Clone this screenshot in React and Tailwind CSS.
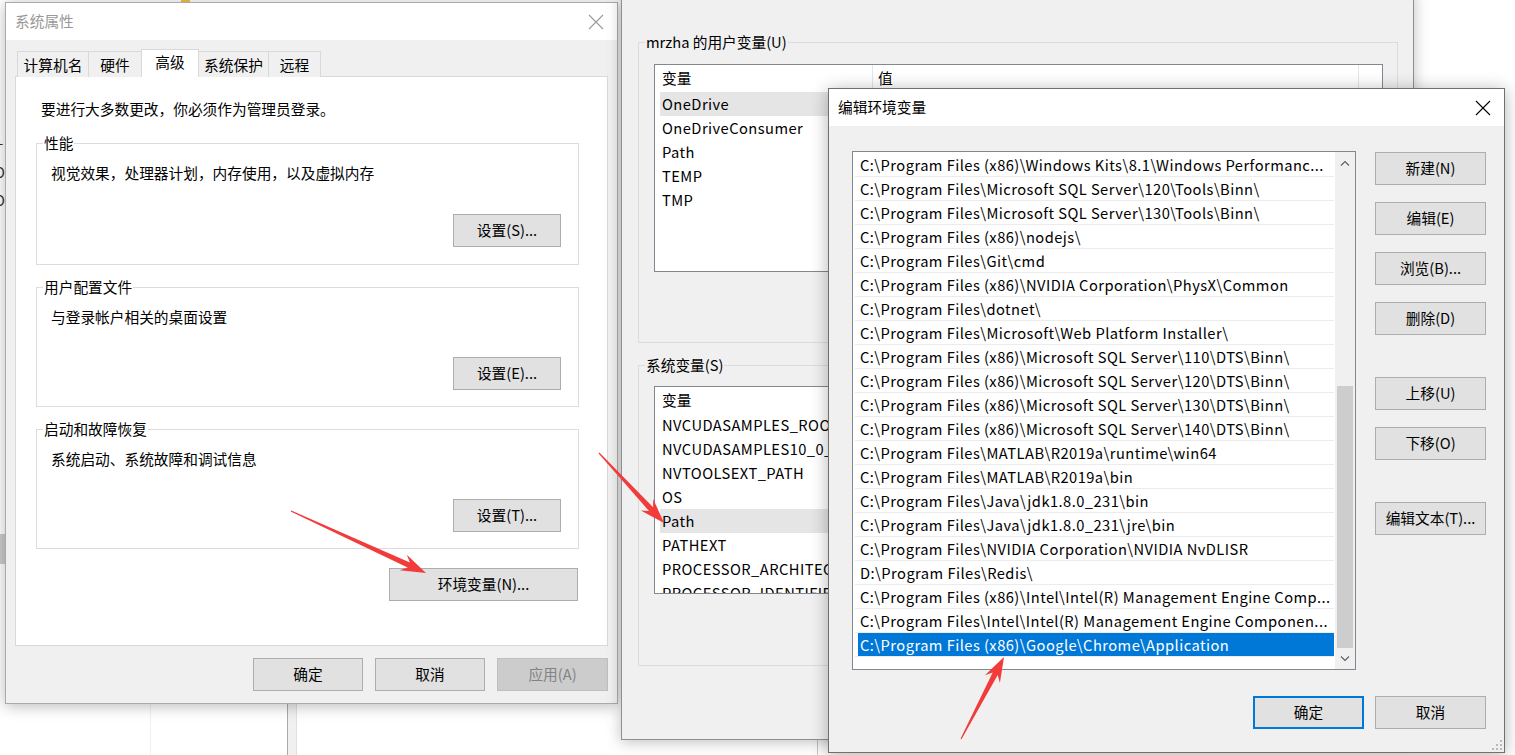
import React from "react";

const Btn = ({ children, className = "", disabled = false }) => (
  <div
    className={`flex items-center justify-center border leading-none ${
      disabled
        ? "border-[#bfbfbf] bg-[#cccccc] text-[#838383]"
        : "border-[#adadad] bg-[#e1e1e1] text-black"
    } ${className}`}
  >
    {children}
  </div>
);

const CloseX = ({ color = "#000" }) => (
  <svg width="16" height="16" viewBox="0 0 16 16">
    <path d="M1 1 L15 15 M15 1 L1 15" stroke={color} strokeWidth="1.1" />
  </svg>
);

const Group = ({ title, className = "", children }) => (
  <div className={`relative border border-[#dcdcdc] ${className}`}>
    <span className="absolute -top-[11px] left-[6px] px-[1px] leading-[20px] bg-inherit">
      {title}
    </span>
    {children}
  </div>
);

// arrow polygon from tail to tip
function arrowPoints(x1, y1, x2, y2) {
  const dx = x2 - x1;
  const dy = y2 - y1;
  const len = Math.hypot(dx, dy);
  const ux = dx / len;
  const uy = dy / len;
  const nx = -uy;
  const ny = ux;
  const L = 25;
  const W = 8.5;
  const w = 2.8;
  const notch = 6;
  const p = (a, b) => `${a.toFixed(1)},${b.toFixed(1)}`;
  const nkx = x2 - (L - notch) * ux;
  const nky = y2 - (L - notch) * uy;
  const bx = x2 - L * ux;
  const by = y2 - L * uy;
  return [
    p(x1 + nx * 0.6, y1 + ny * 0.6),
    p(nkx + nx * w, nky + ny * w),
    p(bx + nx * W, by + ny * W),
    p(x2, y2),
    p(bx - nx * W, by - ny * W),
    p(nkx - nx * w, nky - ny * w),
    p(x1 - nx * 0.6, y1 - ny * 0.6),
  ].join(" ");
}

const arrows = [
  [291, 511, 426, 573],
  [599, 453, 664, 523],
  [961, 739, 1004, 657],
];

const tabs = [
  { name: "计算机名", w: "w-[72px]" },
  { name: "硬件", w: "w-[54px] -ml-[1px]" },
  { name: "高级", w: "w-[58px] -ml-[1px]", active: true },
  { name: "系统保护", w: "w-[71px] -ml-[1px]" },
  { name: "远程", w: "w-[53px] -ml-[1px]" },
];

const userVars = ["OneDrive", "OneDriveConsumer", "Path", "TEMP", "TMP"];
const sysVars = [
  "NVCUDASAMPLES_ROOT",
  "NVCUDASAMPLES10_0_ROOT",
  "NVTOOLSEXT_PATH",
  "OS",
  "Path",
  "PATHEXT",
  "PROCESSOR_ARCHITECTURE",
  "PROCESSOR_IDENTIFIER",
];

const paths = [
  "C:\\Program Files (x86)\\Windows Kits\\8.1\\Windows Performanc...",
  "C:\\Program Files\\Microsoft SQL Server\\120\\Tools\\Binn\\",
  "C:\\Program Files\\Microsoft SQL Server\\130\\Tools\\Binn\\",
  "C:\\Program Files (x86)\\nodejs\\",
  "C:\\Program Files\\Git\\cmd",
  "C:\\Program Files (x86)\\NVIDIA Corporation\\PhysX\\Common",
  "C:\\Program Files\\dotnet\\",
  "C:\\Program Files\\Microsoft\\Web Platform Installer\\",
  "C:\\Program Files (x86)\\Microsoft SQL Server\\110\\DTS\\Binn\\",
  "C:\\Program Files (x86)\\Microsoft SQL Server\\120\\DTS\\Binn\\",
  "C:\\Program Files (x86)\\Microsoft SQL Server\\130\\DTS\\Binn\\",
  "C:\\Program Files (x86)\\Microsoft SQL Server\\140\\DTS\\Binn\\",
  "C:\\Program Files\\MATLAB\\R2019a\\runtime\\win64",
  "C:\\Program Files\\MATLAB\\R2019a\\bin",
  "C:\\Program Files\\Java\\jdk1.8.0_231\\bin",
  "C:\\Program Files\\Java\\jdk1.8.0_231\\jre\\bin",
  "C:\\Program Files\\NVIDIA Corporation\\NVIDIA NvDLISR",
  "D:\\Program Files\\Redis\\",
  "C:\\Program Files (x86)\\Intel\\Intel(R) Management Engine Comp...",
  "C:\\Program Files\\Intel\\Intel(R) Management Engine Componen...",
  "C:\\Program Files (x86)\\Google\\Chrome\\Application",
];

// the value column and the tail of each name sit under the edit dialog
const VarList = ({ items, selected, headerH, showValue = true, className = "" }) => (
  <div className={`border border-[#828790] bg-white overflow-hidden ${className}`}>
    <div className={`flex ${headerH}`}>
      <div className="w-[218px] pl-[7px] flex items-center border-r border-[#e5e5e5]">变量</div>
      <div className="w-[486px] pl-[5px] flex items-center border-r border-[#e5e5e5]">
        {showValue ? "值" : ""}
      </div>
    </div>
    {items.map((v) => (
      <div key={v} className="h-[24px] pl-[5px] flex">
        <div
          className={`flex-1 flex items-center pl-[2px] whitespace-nowrap tracking-[0.45px] ${
            v === selected ? "bg-[#e5e5e5]" : ""
          }`}
        >
          {v}
        </div>
      </div>
    ))}
  </div>
);

const SystemProps = () => (
  <div className="absolute left-[5px] top-[2px] w-[613px] h-[702px] border border-[#aaaaaa] bg-[#f0f0f0] shadow-[0_2px_14px_rgba(0,0,0,0.28)] flex flex-col">
    <div className="h-[37px] bg-white flex items-center justify-between pl-[9px] pr-[13px] text-[#999999]">
      <span>系统属性</span>
      <CloseX color="#9a9a9a" />
    </div>
    <div className="px-[9px] pt-[10px]">
      {/* tabs */}
      <div className="flex items-end h-[27px] pl-[2px]">
        {tabs.map((t) =>
          t.active ? (
            <div
              key={t.name}
              className={`${t.w} h-[28px] relative z-10 bg-white border border-b-0 border-[#d9d9d9] flex items-center justify-center pb-[3px]`}
            >
              {t.name}
            </div>
          ) : (
            <div
              key={t.name}
              className={`${t.w} h-[26px] border border-b-0 border-[#d9d9d9] bg-[#f0f0f0] flex items-center justify-center pt-[1px]`}
            >
              {t.name}
            </div>
          )
        )}
      </div>
      {/* panel */}
      <div className="h-[570px] -mt-[1px] border border-[#d9d9d9] bg-white pl-[20px] flex flex-col">
        <div className="mt-[22px] ml-[5px] leading-[20px]">要进行大多数更改，你必须作为管理员登录。</div>
        <Group title="性能" className="mt-[24px] w-[543px] bg-white">
          <div className="mt-[19px] pl-[14px] leading-[20px]">视觉效果，处理器计划，内存使用，以及虚拟内存</div>
          <div className="flex justify-end pr-[17px] mt-[31px] pb-[17px]">
            <Btn className="w-[108px] h-[33px]">设置(S)...</Btn>
          </div>
        </Group>
        <Group title="用户配置文件" className="mt-[22px] w-[543px] bg-white">
          <div className="mt-[19px] pl-[14px] leading-[20px]">与登录帐户相关的桌面设置</div>
          <div className="flex justify-end pr-[17px] mt-[30px] pb-[16px]">
            <Btn className="w-[108px] h-[33px]">设置(E)...</Btn>
          </div>
        </Group>
        <Group title="启动和故障恢复" className="mt-[22px] w-[543px] bg-white">
          <div className="mt-[19px] pl-[14px] leading-[20px]">系统启动、系统故障和调试信息</div>
          <div className="flex justify-end pr-[17px] mt-[30px] pb-[16px]">
            <Btn className="w-[108px] h-[33px]">设置(T)...</Btn>
          </div>
        </Group>
        <div className="flex justify-end pr-[29px] mt-[19px]">
          <Btn className="w-[189px] h-[33px]">环境变量(N)...</Btn>
        </div>
      </div>
      <div className="flex justify-end gap-[12px] mt-[12px]">
        <Btn className="w-[110px] h-[33px]">确定</Btn>
        <Btn className="w-[110px] h-[33px]">取消</Btn>
        <Btn disabled className="w-[111px] h-[33px]">应用(A)</Btn>
      </div>
    </div>
  </div>
);

const EnvVars = () => (
  <div className="absolute left-[621px] -top-[10px] w-[793px] h-[750px] border border-[#8f8f8f] bg-[#f0f0f0] shadow-[0_2px_14px_rgba(0,0,0,0.25)] pl-[16px] pr-[15px] pt-[51px]">
    <Group title="mrzha 的用户变量(U)" className="h-[301px] bg-[#f0f0f0]">
      <VarList items={userVars} selected="OneDrive" headerH="h-[27px]" className="mt-[21px] ml-[15px] w-[729px] h-[208px]" />
    </Group>
    <Group title="系统变量(S)" className="mt-[22px] h-[301px] bg-[#f0f0f0]">
      <VarList
        items={sysVars}
        selected="Path"
        headerH="h-[26px]"
        showValue={false}
        className="mt-[20px] ml-[15px] w-[729px] h-[208px]"
      />
    </Group>
  </div>
);

const ResizeGrip = () => (
  <svg width="12" height="12" viewBox="0 0 12 12" className="absolute right-[1px] bottom-[1px]">
    {[
      [10, 2],
      [6, 6],
      [10, 6],
      [2, 10],
      [6, 10],
      [10, 10],
    ].map(([x, y]) => (
      <rect key={`${x}-${y}`} x={x - 1} y={y - 1} width="2" height="2" fill="#b8b8b8" />
    ))}
  </svg>
);

const EditEnv = () => (
  <div className="absolute left-[828px] top-[88px] w-[677px] h-[665px] border border-[#707070] bg-[#f0f0f0] shadow-[0_2px_16px_rgba(0,0,0,0.3)] flex flex-col">
    <div className="h-[37px] bg-white flex items-center justify-between pl-[9px] pr-[13px] shrink-0">
      <span>编辑环境变量</span>
      <CloseX />
    </div>
    <div className="flex pl-[23px] pt-[25px]">
      {/* path list */}
      <div className="w-[504px] h-[519px] border border-[#828790] bg-white flex">
        <div className="flex-1 pl-[2px] pt-[1px]">
          {paths.map((p, i) => (
            <div key={p} className="h-[24px] border-b border-[#ececec] pl-[3px]">
              <div
                className={`h-[23px] pl-[2px] pt-[1px] flex items-center whitespace-nowrap overflow-hidden tracking-[0.45px] ${
                  i === paths.length - 1 ? "bg-[#0078d7] text-white" : ""
                }`}
              >
                {p}
              </div>
            </div>
          ))}
        </div>
        <div className="w-[20px] ml-[1px] bg-[#f0f0f0] flex flex-col">
          <div className="h-[22px] flex items-center justify-center">
            <svg width="10" height="6" viewBox="0 0 10 6">
              <path d="M1 5.5 L5 1.5 L9 5.5" stroke="#606060" strokeWidth="1.2" fill="none" />
            </svg>
          </div>
          <div className="flex-1 flex flex-col px-[2px]">
            <div className="h-[212px]" />
            <div className="h-[262px] bg-[#cdcdcd]" />
          </div>
          <div className="h-[20px] flex items-center justify-center">
            <svg width="10" height="6" viewBox="0 0 10 6">
              <path d="M1 0.5 L5 4.5 L9 0.5" stroke="#606060" strokeWidth="1.2" fill="none" />
            </svg>
          </div>
        </div>
      </div>
      {/* action buttons */}
      <div className="ml-[19px] pt-[1px] flex flex-col w-[111px]">
        <Btn className="h-[33px]">新建(N)</Btn>
        <Btn className="h-[33px] mt-[17px]">编辑(E)</Btn>
        <Btn className="h-[33px] mt-[17px]">浏览(B)...</Btn>
        <Btn className="h-[33px] mt-[17px]">删除(D)</Btn>
        <Btn className="h-[33px] mt-[42px]">上移(U)</Btn>
        <Btn className="h-[33px] mt-[17px]">下移(O)</Btn>
        <Btn className="h-[33px] mt-[42px]">编辑文本(T)...</Btn>
      </div>
    </div>
    <div className="flex justify-end gap-[11px] mt-[26px] pr-[18px]">
      <div className="w-[111px] h-[33px] border-2 border-[#0078d7] bg-[#e1e1e1] flex items-center justify-center leading-none">
        确定
      </div>
      <Btn className="w-[111px] h-[33px]">取消</Btn>
    </div>
    <ResizeGrip />
  </div>
);

export default function App() {
  return (
    <div className="relative w-[1515px] h-[755px] overflow-hidden bg-white text-[14.7px] text-black font-['Noto_Sans_CJK_SC',sans-serif]">
      {/* desktop fragments behind the dialogs */}
      <div className="absolute left-[181px] top-0 w-[9px] h-[3px] bg-[#f3c040]" />
      <div className="absolute left-0 top-[534px] w-[5px] h-[30px] bg-[#cccccc]" />
      <div className="absolute left-0 top-[130px] w-[5px] h-[80px] overflow-hidden text-[#333]">
        <div className="-ml-[5px] leading-[28px]">
          <div>+</div>
          <div className="-ml-[1px]">O</div>
          <div className="-ml-[1px]">O</div>
        </div>
      </div>
      <div className="absolute left-[150px] top-[700px] w-px h-[55px] bg-[#f0f0f0]" />
      <div className="absolute left-[287px] top-[700px] w-[10px] h-[55px] bg-[#f0f0f0] border-l border-r border-[#a9a9a9] border-r-[#e0e0e0]" />
      <div className="absolute left-[817px] top-[735px] w-px h-[20px] bg-[#c8c8c8]" />

      <SystemProps />
      <EnvVars />
      <EditEnv />

      <svg className="absolute inset-0 pointer-events-none" width="1515" height="755">
        {arrows.map((a, i) => (
          <polygon key={i} points={arrowPoints(...a)} fill="#f23b3b" />
        ))}
      </svg>
    </div>
  );
}
